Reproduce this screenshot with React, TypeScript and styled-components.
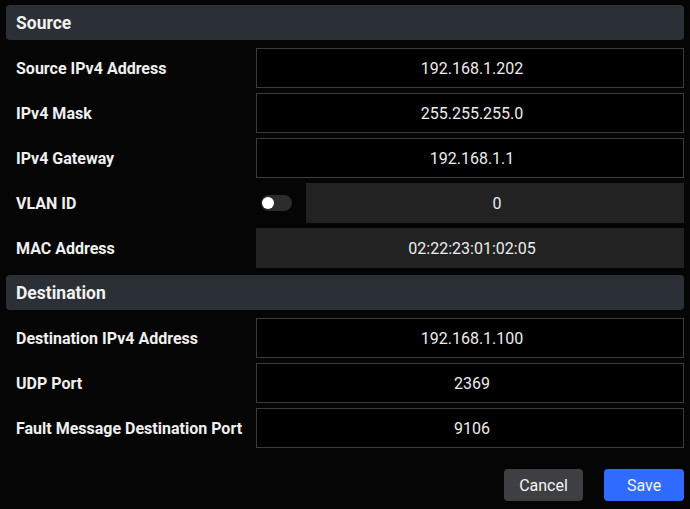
import styled, { createGlobalStyle } from 'styled-components';

const GlobalStyle = createGlobalStyle`
  html, body {
    margin: 0;
    padding: 0;
    background: #050505;
  }
  body {
    font-family: Roboto, "Liberation Sans", sans-serif;
    color: #ececec;
  }
`;

const Panel = styled.div`
  width: 690px;
  height: 509px;
  box-sizing: border-box;
  padding: 5px 6px 0 6px;
  display: flex;
  flex-direction: column;
`;

const SectionHeader = styled.div`
  height: 35px;
  display: flex;
  align-items: center;
  padding-left: 10px;
  background: #2b2f36;
  border-radius: 4px;
  font-size: 17.5px;
  font-weight: 700;
  color: #f2f2f2;
`;

const Rows = styled.div<{ $after?: number }>`
  display: flex;
  flex-direction: column;
  gap: 5px;
  margin-top: 8px;
  margin-bottom: ${(p) => p.$after ?? 0}px;
`;

const Row = styled.div`
  display: grid;
  grid-template-columns: 250px 1fr;
  height: 40px;
  align-items: center;
`;

const Label = styled.div`
  padding-left: 10px;
  font-size: 16px;
  font-weight: 700;
  color: #f0f0f0;
`;

const Field = styled.div<{ $disabled?: boolean }>`
  height: 40px;
  box-sizing: border-box;
  display: flex;
  align-items: center;
  justify-content: center;
  padding-left: 4px;
  font-size: 16px;
  color: #ececec;
  background: ${(p) => (p.$disabled ? '#222222' : '#000000')};
  border: 1px solid ${(p) => (p.$disabled ? '#222222' : '#3c3c3c')};
`;

const SwitchField = styled.div`
  display: flex;
  align-items: center;
  height: 40px;
  gap: 14px;
`;

const Toggle = styled.div`
  width: 31px;
  height: 16px;
  margin-left: 5px;
  border-radius: 8px;
  background: #2c2c2c;
  position: relative;
  flex-shrink: 0;

  &::after {
    content: '';
    position: absolute;
    left: 1px;
    top: 2px;
    width: 12px;
    height: 12px;
    border-radius: 50%;
    background: #ffffff;
  }
`;

const Grow = styled(Field)`
  flex: 1;
`;

const Actions = styled.div`
  display: flex;
  justify-content: flex-end;
  gap: 21px;
  margin-top: 21px;
`;

const Button = styled.button<{ $primary?: boolean }>`
  width: ${(p) => (p.$primary ? 80 : 79)}px;
  height: 32px;
  border: none;
  border-radius: 4px;
  font-family: Roboto, "Liberation Sans", sans-serif;
  font-size: 16px;
  color: #f4f4f4;
  background: ${(p) => (p.$primary ? '#2f6bff' : '#3d3f42')};
  cursor: pointer;
`;

const App = () => {
  return (
    <>
      <GlobalStyle />
      <Panel>
        <SectionHeader>Source</SectionHeader>
        <Rows $after={7}>
          <Row>
            <Label>Source IPv4 Address</Label>
            <Field>192.168.1.202</Field>
          </Row>
          <Row>
            <Label>IPv4 Mask</Label>
            <Field>255.255.255.0</Field>
          </Row>
          <Row>
            <Label>IPv4 Gateway</Label>
            <Field>192.168.1.1</Field>
          </Row>
          <Row>
            <Label>VLAN ID</Label>
            <SwitchField>
              <Toggle />
              <Grow $disabled>0</Grow>
            </SwitchField>
          </Row>
          <Row>
            <Label>MAC Address</Label>
            <Field $disabled>02:22:23:01:02:05</Field>
          </Row>
        </Rows>
        <SectionHeader>Destination</SectionHeader>
        <Rows>
          <Row>
            <Label>Destination IPv4 Address</Label>
            <Field>192.168.1.100</Field>
          </Row>
          <Row>
            <Label>UDP Port</Label>
            <Field>2369</Field>
          </Row>
          <Row>
            <Label>Fault Message Destination Port</Label>
            <Field>9106</Field>
          </Row>
        </Rows>
        <Actions>
          <Button>Cancel</Button>
          <Button $primary>Save</Button>
        </Actions>
      </Panel>
    </>
  );
};

export default App;
